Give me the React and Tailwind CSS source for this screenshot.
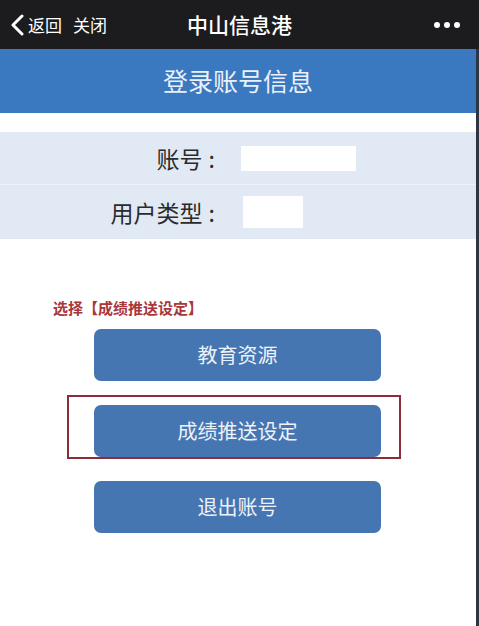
import React from "react";

const font = { fontFamily: '"Noto Sans CJK SC", "Noto Sans", sans-serif' };

function Button({ children }) {
  return (
    <div className="w-[287px] h-[52px] rounded-[7px] bg-[#4676b2] flex items-center justify-center text-[20px] text-[#edf2f8]">
      {children}
    </div>
  );
}

function Label({ children }) {
  return (
    <div className="w-[215px] text-right text-[23px] text-[#2b2b2b]">
      {children}
      <span className="ml-[6px]">:</span>
    </div>
  );
}

export default function App() {
  return (
    <div className="w-[479px] h-[626px] bg-white flex flex-col overflow-hidden" style={font}>
      {/* wechat top bar */}
      <div className="h-[49px] bg-[#1c1c1e] relative flex items-center text-white shrink-0">
        <div className="flex items-center pl-[10px]">
          <svg width="16" height="22" viewBox="0 0 16 22" className="mr-[2px]">
            <path d="M12 2 L3 11 L12 20" fill="none" stroke="#fff" strokeWidth="3" strokeLinecap="round" strokeLinejoin="round" />
          </svg>
          <span className="text-[17px] leading-none">返回</span>
          <span className="text-[17px] leading-none ml-[11px]">关闭</span>
        </div>
        <div className="absolute left-0 right-0 text-center text-[21px] font-medium pointer-events-none">中山信息港</div>
        <div className="ml-auto mr-[19px] flex gap-[4px]">
          <span className="w-[6px] h-[6px] rounded-full bg-white" />
          <span className="w-[6px] h-[6px] rounded-full bg-white" />
          <span className="w-[6px] h-[6px] rounded-full bg-white" />
        </div>
      </div>

      <div className="flex flex-1">
        <div className="flex-1 flex flex-col">
          <div className="h-[64px] bg-[#3a78c0] flex items-center justify-center text-[25px] text-[#eaf1fa]">
            登录账号信息
          </div>
          <div className="h-[19px]" />
          <div className="h-[53px] bg-[#e1eaf4] flex items-center border-b border-[#edf2f8]">
            <Label>账号</Label>
            <div className="ml-[26px] w-[115px] h-[25px] bg-white" />
          </div>
          <div className="h-[54px] bg-[#e1eaf4] flex items-center">
            <Label>用户类型</Label>
            <div className="ml-[28px] w-[60px] h-[32px] bg-white" />
          </div>

          <div className="mt-[59px] pl-[53px] text-[15px] leading-[20px] font-bold text-[#a8363a]">
            选择【成绩推送设定】
          </div>
          <div className="mt-[11px] pl-[94px]">
            <Button>教育资源</Button>
          </div>
          <div className="mt-[14px] ml-[67px] w-[334px] h-[64px] border-2 border-[#8c2d3a] pt-[8px] pl-[25px]">
            <Button>成绩推送设定</Button>
          </div>
          <div className="mt-[22px] pl-[94px]">
            <Button>退出账号</Button>
          </div>
        </div>
        <div className="w-[3px] bg-[#2f3542]" />
      </div>
    </div>
  );
}
